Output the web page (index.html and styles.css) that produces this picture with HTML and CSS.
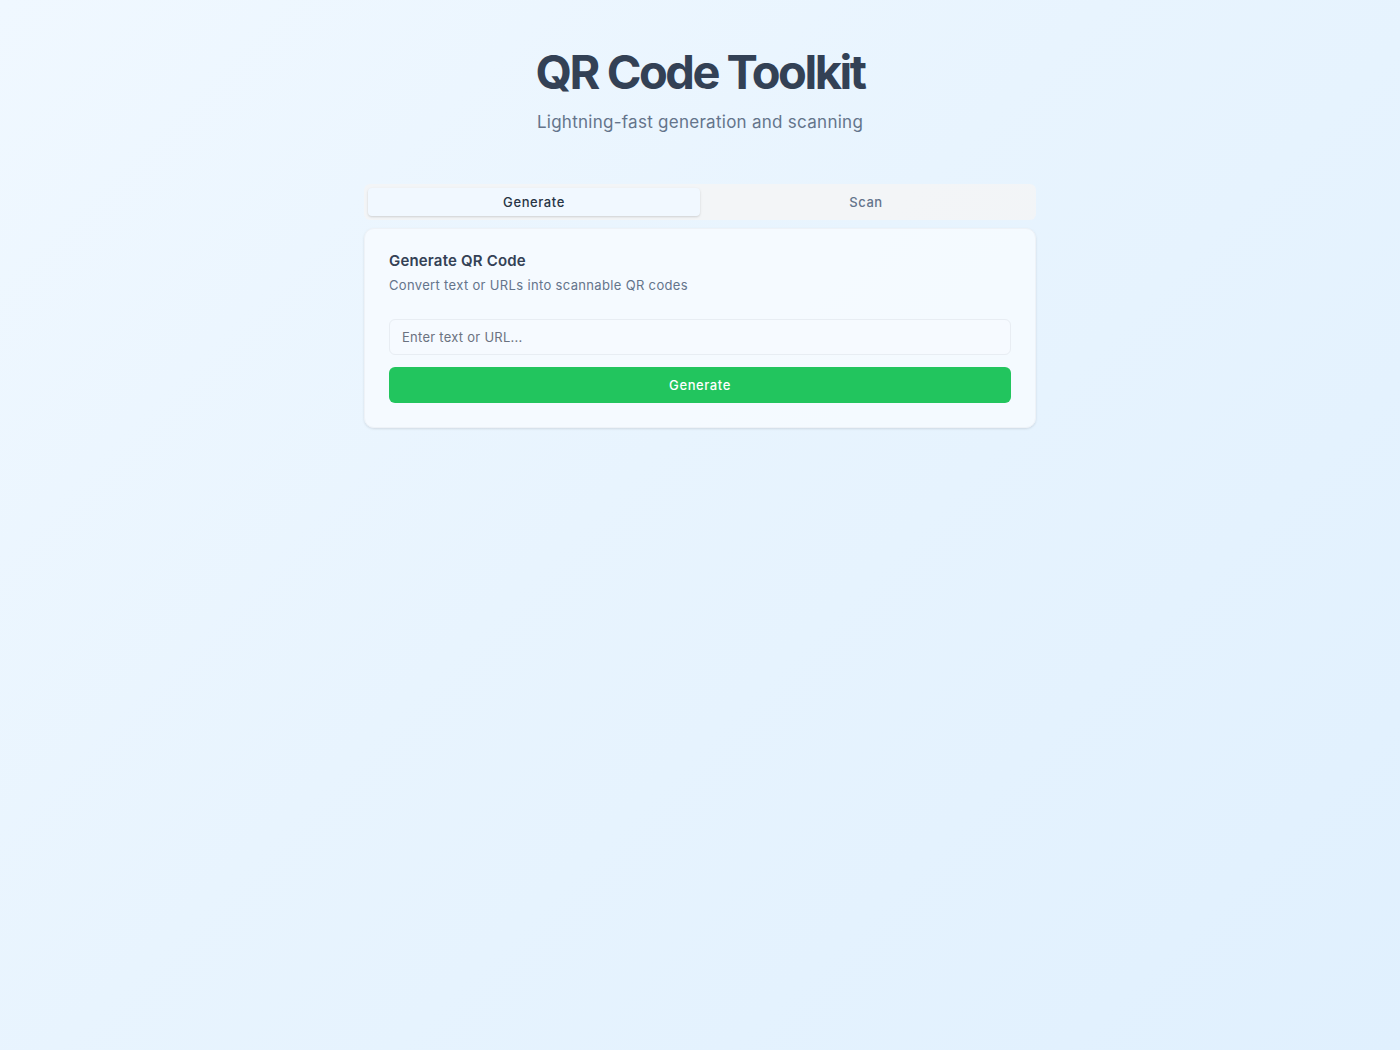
FILE: index.html
```html
<!DOCTYPE html>
<html lang="en">
<head>
  <meta charset="UTF-8">
  <meta name="viewport" content="width=device-width, initial-scale=1.0">
  <title>QR Code Toolkit</title>
  <link rel="stylesheet" href="styles.css">
</head>
<body>
  <main class="page">
    <header class="hero">
      <h1>QR Code Toolkit</h1>
      <p>Lightning-fast generation and scanning</p>
    </header>

    <div class="tabs">
      <button class="tab active">Generate</button>
      <button class="tab">Scan</button>
    </div>

    <section class="card">
      <div class="card-header">
        <h2>Generate QR Code</h2>
        <p>Convert text or URLs into scannable QR codes</p>
      </div>
      <div class="card-content">
        <input class="text-input" type="text" placeholder="Enter text or URL...">
        <button class="generate-btn">Generate</button>
      </div>
    </section>
  </main>
</body>
</html>
```

FILE: styles.css
```css
html, body {
  margin: 0;
  min-height: 100%;
}
body {
  font-family: Inter, "Noto Sans", sans-serif;
  color: #334155;
  min-height: 1050px;
  background: linear-gradient(135deg, #f0f8ff 0%, #e8f4fe 45%, #e0f0fe 100%);
}
.page {
  max-width: 672px;
  margin: 0 auto;
  padding-top: 48px;
}
.hero {
  text-align: center;
  margin-bottom: 48px;
}
.hero h1 {
  margin: 0 0 12px;
  font-size: 47px;
  line-height: 48px;
  font-weight: 700;
  letter-spacing: -0.053em;
  color: #334155;
}
.hero p {
  margin: 0;
  font-size: 17px;
  line-height: 28px;
  letter-spacing: 0.016em;
  color: #64748b;
}
.tabs {
  display: grid;
  grid-template-columns: 1fr 1fr;
  height: 36px;
  padding: 4px;
  box-sizing: border-box;
  border-radius: 6px;
  background: rgba(243, 244, 246, 0.92);
}
.tab {
  border: none;
  background: transparent;
  font-family: inherit;
  font-size: 13px;
  font-weight: 500;
  letter-spacing: 0.045em;
  color: #64748b;
  border-radius: 4px;
  cursor: pointer;
}
.tab.active {
  background: #f1f8ff;
  color: #273444;
  box-shadow: 0 1px 3px rgba(0, 0, 0, 0.1), 0 1px 2px rgba(0, 0, 0, 0.06);
}
.card {
  margin-top: 8px;
  background: rgba(248, 251, 255, 0.8);
  border: 1px solid #eef2f7;
  border-radius: 10px;
  box-shadow: 0 1px 3px rgba(0, 0, 0, 0.08), 0 1px 2px rgba(0, 0, 0, 0.04);
}
.card-header {
  padding: 24px 24px 24px;
}
.card-header h2 {
  margin: 0;
  font-size: 15px;
  line-height: 16px;
  font-weight: 600;
  color: #334155;
  letter-spacing: 0.012em;
}
.card-header p {
  margin: 6px 0 0;
  font-size: 13px;
  line-height: 20px;
  letter-spacing: 0.026em;
  color: #64748b;
}
.card-content {
  padding: 0 24px 24px;
  display: flex;
  flex-direction: column;
  gap: 12px;
}
.text-input {
  height: 36px;
  box-sizing: border-box;
  padding: 0 12px;
  border: 1px solid #e8edf3;
  border-radius: 6px;
  background: #f6faff;
  font-family: inherit;
  font-size: 13px;
  letter-spacing: 0.02em;
  color: #334155;
  outline: none;
}
.text-input::placeholder {
  color: #6b7280;
}
.generate-btn {
  height: 36px;
  border: none;
  border-radius: 6px;
  background: #22c55e;
  color: #fff;
  font-family: inherit;
  font-size: 13px;
  font-weight: 500;
  letter-spacing: 0.045em;
  cursor: pointer;
}
```
